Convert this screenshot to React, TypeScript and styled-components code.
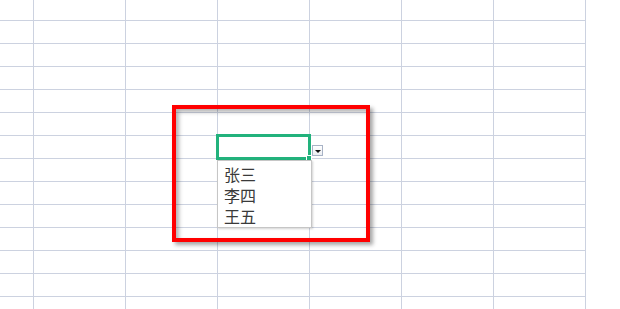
import React, { useState } from "react";
import { styled, createGlobalStyle } from "styled-components";

const COLS = 7;
const ROWS = 14;
const SELECTED = { row: 6, col: 3 };
const OPTIONS = ["张三", "李四", "王五"];

const GlobalStyle = createGlobalStyle`
  html, body {
    margin: 0;
    padding: 0;
    background: #ffffff;
    overflow: hidden;
  }
  body {
    font-family: "Noto Sans CJK SC", "Liberation Sans", sans-serif;
  }
`;

const App = () => {
  const [open] = useState(true);

  const cells = [];
  for (let r = 0; r < ROWS; r++) {
    for (let c = 0; c < COLS; c++) {
      const isSelected = r === SELECTED.row && c === SELECTED.col;
      cells.push(
        <Cell key={`${r}-${c}`} selected={isSelected}>
          {isSelected && (
            <>
              <Selection>
                <FillHandle />
              </Selection>
              <DropButton>
                <Arrow />
              </DropButton>
              {open && (
                <OptionList>
                  {OPTIONS.map((name) => (
                    <OptionItem key={name}>{name}</OptionItem>
                  ))}
                </OptionList>
              )}
            </>
          )}
        </Cell>
      );
    }
  }

  return (
    <>
      <GlobalStyle />
      <Page>
        <Sheet>{cells}</Sheet>
        <Highlight />
      </Page>
    </>
  );
};

export default App;

const Page = styled.div`
  position: relative;
  width: 620px;
  height: 309px;
  overflow: hidden;
`;

const Sheet = styled.div`
  display: grid;
  grid-template-columns: 34px repeat(6, 92px);
  grid-template-rows: 21px repeat(13, 23px);
`;

const Cell = styled.div<{ selected: boolean }>`
  position: relative;
  box-sizing: border-box;
  border-right: 1px solid #ccd2e0;
  border-bottom: 1px solid #ccd2e0;
  z-index: ${({ selected }) => (selected ? 2 : 0)};
`;

const Selection = styled.div`
  position: absolute;
  left: -2px;
  top: -2px;
  width: 95px;
  height: 26px;
  box-sizing: border-box;
  border: 3px solid #22b27c;
`;

const FillHandle = styled.div`
  position: absolute;
  right: -4px;
  bottom: -4px;
  width: 4px;
  height: 4px;
  background: #22b27c;
  border: 1px solid #ffffff;
`;

const DropButton = styled.div`
  position: absolute;
  left: 94px;
  top: 9px;
  width: 11px;
  height: 11px;
  box-sizing: border-box;
  display: flex;
  align-items: center;
  justify-content: center;
  border: 1px solid #a8b3c6;
  background: linear-gradient(#ffffff, #eceef2);
`;

const Arrow = styled.div`
  width: 0;
  height: 0;
  margin-top: 1px;
  border-left: 3px solid transparent;
  border-right: 3px solid transparent;
  border-top: 3px solid #111111;
`;

const OptionList = styled.div`
  position: absolute;
  left: -1px;
  top: 24px;
  width: 95px;
  box-sizing: border-box;
  padding: 3px 0 0;
  background: #ffffff;
  border: 1px solid #c6c6c6;
  box-shadow: 1px 1px 2px rgba(0, 0, 0, 0.18);
`;

const OptionItem = styled.div`
  padding-left: 6px;
  height: 21px;
  line-height: 21px;
  font-size: 16px;
  color: #3a3a3a;
  font-family: "Noto Sans CJK SC", sans-serif;
  letter-spacing: 0;
`;

const Highlight = styled.div`
  position: absolute;
  left: 172px;
  top: 105px;
  width: 198px;
  height: 137px;
  box-sizing: border-box;
  border: 4px solid #ff0000;
  box-shadow: 3px 3px 4px rgba(0, 0, 0, 0.35),
    inset 3px 3px 4px rgba(0, 0, 0, 0.3);
  pointer-events: none;
  z-index: 3;
`;
